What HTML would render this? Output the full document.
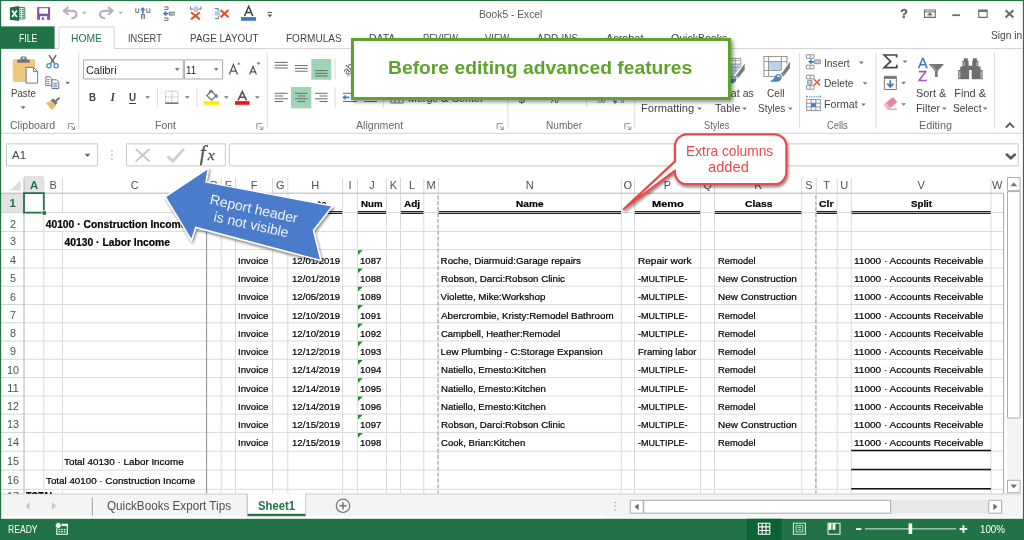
<!DOCTYPE html><html lang="en"><head><meta charset="utf-8"><title>Book5 - Excel</title><style>
html,body{margin:0;padding:0}
body{width:1024px;height:540px;overflow:hidden;position:relative;background:#fff;font-family:'Liberation Sans',sans-serif}
svg{position:absolute;left:0;top:0;overflow:visible}
.t{position:absolute;white-space:pre;line-height:1;transform-origin:0 0;display:block}
.c{-webkit-text-stroke:.22px #000}
.clip{position:absolute;overflow:hidden}
.lay{position:absolute;left:0;top:0;width:1024px;height:540px;will-change:transform}
</style></head><body>
<svg width="1024" height="540" viewBox="0 0 1024 540"><rect x="0.00" y="0.00" width="1024.00" height="540.00" fill="#fff" />
<line x1="1.00" y1="48.50" x2="1023.00" y2="48.50" stroke="#d4d4d4" stroke-width="1" />
<rect x="1.00" y="26.40" width="53.60" height="22.40" fill="#217346" />
<path d="M58.9 49.3V26.9H114.1V49.3" fill="#fff" stroke="#d4d4d4" stroke-width="1" />
<rect x="59.40" y="47.50" width="54.20" height="2.20" fill="#fff" />
<line x1="1.00" y1="133.30" x2="1023.00" y2="133.30" stroke="#d2d2d2" stroke-width="1" />
<line x1="78.70" y1="53.00" x2="78.70" y2="128.60" stroke="#dadada" stroke-width="1" />
<line x1="267.20" y1="53.00" x2="267.20" y2="128.60" stroke="#dadada" stroke-width="1" />
<line x1="507.90" y1="53.00" x2="507.90" y2="128.60" stroke="#dadada" stroke-width="1" />
<line x1="634.80" y1="53.00" x2="634.80" y2="128.60" stroke="#dadada" stroke-width="1" />
<line x1="799.60" y1="53.00" x2="799.60" y2="128.60" stroke="#dadada" stroke-width="1" />
<line x1="876.00" y1="53.00" x2="876.00" y2="128.60" stroke="#dadada" stroke-width="1" />
<line x1="994.30" y1="53.00" x2="994.30" y2="128.60" stroke="#dadada" stroke-width="1" />
<path d="M6.5 143.9H97.6V165.9H6.5Z" fill="#fff" stroke="#c8c8c8" stroke-width="1" />
<path d="M84.51 153.70H90.49L87.50 157.00Z" fill="#6a6a6a" stroke="none" stroke-width="1" />
<rect x="111.30" y="150.20" width="1.30" height="1.30" fill="#9a9a9a" />
<rect x="111.30" y="154.20" width="1.30" height="1.30" fill="#9a9a9a" />
<rect x="111.30" y="158.20" width="1.30" height="1.30" fill="#9a9a9a" />
<path d="M126.5 143.9H225.4V165.9H126.5Z" fill="#fff" stroke="#c8c8c8" stroke-width="1" />
<path d="M229.3 143.9H1018.2V165.9H229.3Z" fill="#fff" stroke="#c8c8c8" stroke-width="1" />
<path d="M135.8 149L149.6 161.4M149.6 149L135.8 161.4" fill="none" stroke="#c6c6c6" stroke-width="1.9" />
<path d="M167.6 156.2L172.8 161.2L184 148.8" fill="none" stroke="#cccccc" stroke-width="2.7" />
<path d="M1006 153.9L1010.8 158.3L1015.6 153.9" fill="none" stroke="#555" stroke-width="2.6" />
<rect x="24.00" y="176.00" width="19.80" height="17.20" fill="#e2e2e2" />
<rect x="1.00" y="193.20" width="23.00" height="19.40" fill="#e2e2e2" />
<path d="M20.6 180.2V190.6H10.2Z" fill="#dcdcdc" stroke="none" stroke-width="1" />
<line x1="43.80" y1="178.00" x2="43.80" y2="193.20" stroke="#d8d8d8" stroke-width="1" />
<line x1="62.40" y1="178.00" x2="62.40" y2="193.20" stroke="#d8d8d8" stroke-width="1" />
<line x1="207.00" y1="178.00" x2="207.00" y2="193.20" stroke="#d8d8d8" stroke-width="1" />
<line x1="221.20" y1="178.00" x2="221.20" y2="193.20" stroke="#d8d8d8" stroke-width="1" />
<line x1="235.50" y1="178.00" x2="235.50" y2="193.20" stroke="#d8d8d8" stroke-width="1" />
<line x1="272.60" y1="178.00" x2="272.60" y2="193.20" stroke="#d8d8d8" stroke-width="1" />
<line x1="287.80" y1="178.00" x2="287.80" y2="193.20" stroke="#d8d8d8" stroke-width="1" />
<line x1="342.60" y1="178.00" x2="342.60" y2="193.20" stroke="#d8d8d8" stroke-width="1" />
<line x1="357.40" y1="178.00" x2="357.40" y2="193.20" stroke="#d8d8d8" stroke-width="1" />
<line x1="386.40" y1="178.00" x2="386.40" y2="193.20" stroke="#d8d8d8" stroke-width="1" />
<line x1="400.50" y1="178.00" x2="400.50" y2="193.20" stroke="#d8d8d8" stroke-width="1" />
<line x1="423.80" y1="178.00" x2="423.80" y2="193.20" stroke="#d8d8d8" stroke-width="1" />
<line x1="438.40" y1="178.00" x2="438.40" y2="193.20" stroke="#d8d8d8" stroke-width="1" />
<line x1="621.25" y1="178.00" x2="621.25" y2="193.20" stroke="#d8d8d8" stroke-width="1" />
<line x1="634.50" y1="178.00" x2="634.50" y2="193.20" stroke="#d8d8d8" stroke-width="1" />
<line x1="700.50" y1="178.00" x2="700.50" y2="193.20" stroke="#d8d8d8" stroke-width="1" />
<line x1="714.50" y1="178.00" x2="714.50" y2="193.20" stroke="#d8d8d8" stroke-width="1" />
<line x1="801.75" y1="178.00" x2="801.75" y2="193.20" stroke="#d8d8d8" stroke-width="1" />
<line x1="816.25" y1="178.00" x2="816.25" y2="193.20" stroke="#d8d8d8" stroke-width="1" />
<line x1="837.20" y1="178.00" x2="837.20" y2="193.20" stroke="#d8d8d8" stroke-width="1" />
<line x1="851.25" y1="178.00" x2="851.25" y2="193.20" stroke="#d8d8d8" stroke-width="1" />
<line x1="991.00" y1="178.00" x2="991.00" y2="193.20" stroke="#d8d8d8" stroke-width="1" />
<line x1="1.00" y1="212.60" x2="24.00" y2="212.60" stroke="#d4d4d4" stroke-width="1" />
<line x1="24.00" y1="212.60" x2="1003.60" y2="212.60" stroke="#dadada" stroke-width="1" />
<line x1="1.00" y1="231.40" x2="24.00" y2="231.40" stroke="#d4d4d4" stroke-width="1" />
<line x1="24.00" y1="231.40" x2="1003.60" y2="231.40" stroke="#dadada" stroke-width="1" />
<line x1="1.00" y1="249.60" x2="24.00" y2="249.60" stroke="#d4d4d4" stroke-width="1" />
<line x1="24.00" y1="249.60" x2="1003.60" y2="249.60" stroke="#dadada" stroke-width="1" />
<line x1="1.00" y1="267.90" x2="24.00" y2="267.90" stroke="#d4d4d4" stroke-width="1" />
<line x1="24.00" y1="267.90" x2="1003.60" y2="267.90" stroke="#dadada" stroke-width="1" />
<line x1="1.00" y1="286.20" x2="24.00" y2="286.20" stroke="#d4d4d4" stroke-width="1" />
<line x1="24.00" y1="286.20" x2="1003.60" y2="286.20" stroke="#dadada" stroke-width="1" />
<line x1="1.00" y1="304.50" x2="24.00" y2="304.50" stroke="#d4d4d4" stroke-width="1" />
<line x1="24.00" y1="304.50" x2="1003.60" y2="304.50" stroke="#dadada" stroke-width="1" />
<line x1="1.00" y1="322.80" x2="24.00" y2="322.80" stroke="#d4d4d4" stroke-width="1" />
<line x1="24.00" y1="322.80" x2="1003.60" y2="322.80" stroke="#dadada" stroke-width="1" />
<line x1="1.00" y1="341.00" x2="24.00" y2="341.00" stroke="#d4d4d4" stroke-width="1" />
<line x1="24.00" y1="341.00" x2="1003.60" y2="341.00" stroke="#dadada" stroke-width="1" />
<line x1="1.00" y1="359.30" x2="24.00" y2="359.30" stroke="#d4d4d4" stroke-width="1" />
<line x1="24.00" y1="359.30" x2="1003.60" y2="359.30" stroke="#dadada" stroke-width="1" />
<line x1="1.00" y1="377.60" x2="24.00" y2="377.60" stroke="#d4d4d4" stroke-width="1" />
<line x1="24.00" y1="377.60" x2="1003.60" y2="377.60" stroke="#dadada" stroke-width="1" />
<line x1="1.00" y1="395.90" x2="24.00" y2="395.90" stroke="#d4d4d4" stroke-width="1" />
<line x1="24.00" y1="395.90" x2="1003.60" y2="395.90" stroke="#dadada" stroke-width="1" />
<line x1="1.00" y1="414.10" x2="24.00" y2="414.10" stroke="#d4d4d4" stroke-width="1" />
<line x1="24.00" y1="414.10" x2="1003.60" y2="414.10" stroke="#dadada" stroke-width="1" />
<line x1="1.00" y1="432.40" x2="24.00" y2="432.40" stroke="#d4d4d4" stroke-width="1" />
<line x1="24.00" y1="432.40" x2="1003.60" y2="432.40" stroke="#dadada" stroke-width="1" />
<line x1="1.00" y1="451.20" x2="24.00" y2="451.20" stroke="#d4d4d4" stroke-width="1" />
<line x1="24.00" y1="451.20" x2="1003.60" y2="451.20" stroke="#dadada" stroke-width="1" />
<line x1="1.00" y1="470.10" x2="24.00" y2="470.10" stroke="#d4d4d4" stroke-width="1" />
<line x1="24.00" y1="470.10" x2="1003.60" y2="470.10" stroke="#dadada" stroke-width="1" />
<line x1="1.00" y1="489.30" x2="24.00" y2="489.30" stroke="#d4d4d4" stroke-width="1" />
<line x1="24.00" y1="489.30" x2="1003.60" y2="489.30" stroke="#dadada" stroke-width="1" />
<line x1="43.80" y1="193.20" x2="43.80" y2="489.30" stroke="#dadada" stroke-width="1" />
<line x1="62.40" y1="193.20" x2="62.40" y2="212.60" stroke="#dadada" stroke-width="1" />
<line x1="62.40" y1="231.40" x2="62.40" y2="470.10" stroke="#dadada" stroke-width="1" />
<line x1="62.40" y1="489.30" x2="62.40" y2="493.70" stroke="#dadada" stroke-width="1" />
<line x1="206.60" y1="178.00" x2="206.60" y2="493.70" stroke="#8f8f8f" stroke-width="1" />
<line x1="221.20" y1="193.20" x2="221.20" y2="493.70" stroke="#dadada" stroke-width="1" />
<line x1="235.50" y1="193.20" x2="235.50" y2="493.70" stroke="#dadada" stroke-width="1" />
<line x1="272.60" y1="193.20" x2="272.60" y2="493.70" stroke="#dadada" stroke-width="1" />
<line x1="287.80" y1="193.20" x2="287.80" y2="493.70" stroke="#dadada" stroke-width="1" />
<line x1="342.60" y1="193.20" x2="342.60" y2="493.70" stroke="#dadada" stroke-width="1" />
<line x1="357.40" y1="193.20" x2="357.40" y2="493.70" stroke="#dadada" stroke-width="1" />
<line x1="386.40" y1="193.20" x2="386.40" y2="493.70" stroke="#dadada" stroke-width="1" />
<line x1="400.50" y1="193.20" x2="400.50" y2="493.70" stroke="#dadada" stroke-width="1" />
<line x1="423.80" y1="193.20" x2="423.80" y2="493.70" stroke="#dadada" stroke-width="1" />
<line x1="438.40" y1="193.20" x2="438.40" y2="493.70" stroke="#e2e2e2" stroke-width="1" />
<line x1="438.00" y1="195.40" x2="438.00" y2="493.70" stroke="#a8a8a8" stroke-width="1.25" stroke-dasharray="3.8 2.1"/>
<line x1="621.25" y1="193.20" x2="621.25" y2="493.70" stroke="#dadada" stroke-width="1" />
<line x1="634.50" y1="193.20" x2="634.50" y2="493.70" stroke="#dadada" stroke-width="1" />
<line x1="700.50" y1="193.20" x2="700.50" y2="493.70" stroke="#dadada" stroke-width="1" />
<line x1="714.50" y1="193.20" x2="714.50" y2="493.70" stroke="#dadada" stroke-width="1" />
<line x1="801.75" y1="193.20" x2="801.75" y2="493.70" stroke="#dadada" stroke-width="1" />
<line x1="816.25" y1="193.20" x2="816.25" y2="493.70" stroke="#e2e2e2" stroke-width="1" />
<line x1="815.85" y1="195.40" x2="815.85" y2="493.70" stroke="#a8a8a8" stroke-width="1.25" stroke-dasharray="3.8 2.1"/>
<line x1="837.20" y1="193.20" x2="837.20" y2="493.70" stroke="#dadada" stroke-width="1" />
<line x1="851.25" y1="193.20" x2="851.25" y2="493.70" stroke="#dadada" stroke-width="1" />
<line x1="991.00" y1="193.20" x2="991.00" y2="493.70" stroke="#dadada" stroke-width="1" />
<line x1="1003.60" y1="193.20" x2="1003.60" y2="493.70" stroke="#adadad" stroke-width="1.1" />
<line x1="1.00" y1="193.20" x2="1003.60" y2="193.20" stroke="#b4b4b4" stroke-width="1" />
<line x1="24.00" y1="178.00" x2="24.00" y2="493.70" stroke="#b4b4b4" stroke-width="1" />
<line x1="235.80" y1="211.50" x2="272.30" y2="211.50" stroke="#262626" stroke-width="1.15" />
<line x1="235.80" y1="213.35" x2="272.30" y2="213.35" stroke="#262626" stroke-width="1.35" />
<line x1="288.10" y1="211.50" x2="342.30" y2="211.50" stroke="#262626" stroke-width="1.15" />
<line x1="288.10" y1="213.35" x2="342.30" y2="213.35" stroke="#262626" stroke-width="1.35" />
<line x1="357.70" y1="211.50" x2="386.10" y2="211.50" stroke="#262626" stroke-width="1.15" />
<line x1="357.70" y1="213.35" x2="386.10" y2="213.35" stroke="#262626" stroke-width="1.35" />
<line x1="400.80" y1="211.50" x2="423.50" y2="211.50" stroke="#262626" stroke-width="1.15" />
<line x1="400.80" y1="213.35" x2="423.50" y2="213.35" stroke="#262626" stroke-width="1.35" />
<line x1="438.70" y1="211.50" x2="620.95" y2="211.50" stroke="#262626" stroke-width="1.15" />
<line x1="438.70" y1="213.35" x2="620.95" y2="213.35" stroke="#262626" stroke-width="1.35" />
<line x1="634.80" y1="211.50" x2="700.20" y2="211.50" stroke="#262626" stroke-width="1.15" />
<line x1="634.80" y1="213.35" x2="700.20" y2="213.35" stroke="#262626" stroke-width="1.35" />
<line x1="714.80" y1="211.50" x2="801.45" y2="211.50" stroke="#262626" stroke-width="1.15" />
<line x1="714.80" y1="213.35" x2="801.45" y2="213.35" stroke="#262626" stroke-width="1.35" />
<line x1="816.55" y1="211.50" x2="836.90" y2="211.50" stroke="#262626" stroke-width="1.15" />
<line x1="816.55" y1="213.35" x2="836.90" y2="213.35" stroke="#262626" stroke-width="1.35" />
<line x1="851.55" y1="211.50" x2="990.70" y2="211.50" stroke="#262626" stroke-width="1.15" />
<line x1="851.55" y1="213.35" x2="990.70" y2="213.35" stroke="#262626" stroke-width="1.35" />
<line x1="851.25" y1="450.60" x2="991.00" y2="450.60" stroke="#111" stroke-width="1.5" />
<line x1="851.25" y1="469.50" x2="991.00" y2="469.50" stroke="#111" stroke-width="1.5" />
<line x1="851.25" y1="488.70" x2="991.00" y2="488.70" stroke="#111" stroke-width="1.5" />
<path d="M358 250.20h4.8l-4.8 4.8Z" fill="#1f8b2c" stroke="none" stroke-width="1" />
<path d="M358 268.50h4.8l-4.8 4.8Z" fill="#1f8b2c" stroke="none" stroke-width="1" />
<path d="M358 286.80h4.8l-4.8 4.8Z" fill="#1f8b2c" stroke="none" stroke-width="1" />
<path d="M358 305.10h4.8l-4.8 4.8Z" fill="#1f8b2c" stroke="none" stroke-width="1" />
<path d="M358 323.40h4.8l-4.8 4.8Z" fill="#1f8b2c" stroke="none" stroke-width="1" />
<path d="M358 341.60h4.8l-4.8 4.8Z" fill="#1f8b2c" stroke="none" stroke-width="1" />
<path d="M358 359.90h4.8l-4.8 4.8Z" fill="#1f8b2c" stroke="none" stroke-width="1" />
<path d="M358 378.20h4.8l-4.8 4.8Z" fill="#1f8b2c" stroke="none" stroke-width="1" />
<path d="M358 396.50h4.8l-4.8 4.8Z" fill="#1f8b2c" stroke="none" stroke-width="1" />
<path d="M358 414.70h4.8l-4.8 4.8Z" fill="#1f8b2c" stroke="none" stroke-width="1" />
<path d="M358 433.00h4.8l-4.8 4.8Z" fill="#1f8b2c" stroke="none" stroke-width="1" />
<path d="M24 193.2H43.8V212.6H24Z" fill="none" stroke="#217346" stroke-width="1.8" />
<rect x="41.60" y="210.40" width="4.40" height="4.40" fill="#fff" />
<rect x="42.40" y="211.20" width="3.60" height="3.60" fill="#217346" />
<rect x="1007.00" y="177.00" width="13.50" height="316.00" fill="#f3f3f3" />
<path d="M1007.5 177.5H1020V190.7H1007.5Z" fill="#fff" stroke="#ababab" stroke-width="1" />
<path d="M1010.3 186.2L1013.75 182.2L1017.2 186.2Z" fill="#777" stroke="none" stroke-width="1" />
<path d="M1007.5 191.6H1020V418H1007.5Z" fill="#fff" stroke="#ababab" stroke-width="1" />
<path d="M1007.5 480.3H1020V492.7H1007.5Z" fill="#fff" stroke="#ababab" stroke-width="1" />
<path d="M1010.3 484.6L1013.75 488.6L1017.2 484.6Z" fill="#777" stroke="none" stroke-width="1" />
<rect x="1.00" y="493.70" width="1022.00" height="25.00" fill="#f4f4f4" />
<line x1="1.00" y1="494.00" x2="1023.00" y2="494.00" stroke="#cdcdcd" stroke-width="1" />
<rect x="1.00" y="515.90" width="604.00" height="2.90" fill="#fff" />
<rect x="605.00" y="516.40" width="418.00" height="2.40" fill="#f9f9f9" />
<path d="M29.6 502V510L25.6 506Z" fill="#c8c8c8" stroke="none" stroke-width="1" />
<path d="M52 502V510L56 506Z" fill="#c8c8c8" stroke="none" stroke-width="1" />
<line x1="92.40" y1="497.50" x2="92.40" y2="515.50" stroke="#ababab" stroke-width="1.2" />
<line x1="247.20" y1="494.00" x2="247.20" y2="514.00" stroke="#c8c8c8" stroke-width="1" />
<rect x="247.40" y="493.20" width="58.20" height="21.60" fill="#fff" />
<rect x="247.40" y="513.80" width="58.20" height="2.40" fill="#217346" />
<line x1="247.40" y1="493.70" x2="247.40" y2="514.00" stroke="#c8c8c8" stroke-width="1" />
<line x1="305.70" y1="493.70" x2="305.70" y2="514.00" stroke="#c8c8c8" stroke-width="1" />
<circle cx="343" cy="505.8" r="6.7" fill="none" stroke="#777" stroke-width="1.2"/>
<path d="M339.4 505.8H346.6M343 502.2V509.4" fill="none" stroke="#777" stroke-width="1.5" />
<rect x="614.40" y="501.80" width="1.30" height="1.30" fill="#9a9a9a" />
<rect x="614.40" y="505.60" width="1.30" height="1.30" fill="#9a9a9a" />
<rect x="614.40" y="509.40" width="1.30" height="1.30" fill="#9a9a9a" />
<rect x="630.00" y="500.00" width="372.40" height="13.40" fill="#e7e7e7" />
<path d="M630.3 500.3H643.2V513.2H630.3Z" fill="#fff" stroke="#ababab" stroke-width="1" />
<path d="M638.6 503.4V510.2L634.6 506.8Z" fill="#6a6a6a" stroke="none" stroke-width="1" />
<path d="M643.8 500.3H890.6V513.2H643.8Z" fill="#fff" stroke="#ababab" stroke-width="1" />
<path d="M988.8 500.3H1001.6V513.2H988.8Z" fill="#fff" stroke="#ababab" stroke-width="1" />
<path d="M993.4 503.4V510.2L997.4 506.8Z" fill="#6a6a6a" stroke="none" stroke-width="1" />
<rect x="1020.50" y="493.70" width="2.50" height="25.00" fill="#fafafa" />
<rect x="0.00" y="518.80" width="1024.00" height="21.40" fill="#217346" />
<rect x="747.00" y="518.80" width="34.80" height="21.40" fill="#0c6435" />
<rect x="0.00" y="0.00" width="1024.00" height="1.10" fill="#217346" />
<rect x="0.00" y="0.00" width="1.15" height="540.00" fill="#217346" />
<rect x="1022.90" y="0.00" width="1.10" height="540.00" fill="#217346" />
<path d="M9.9 7.4L19 6V20.9L9.9 19.7Z" fill="#1e7145" stroke="none" stroke-width="1" />
<path d="M19 7.4H24.2Q24.8 7.4 24.8 8V18.3Q24.8 18.9 24.2 18.9H19Z" fill="#fff" stroke="#1e7145" stroke-width="0.9" />
<line x1="20.00" y1="9.30" x2="24.00" y2="9.30" stroke="#2b8456" stroke-width="1.1" />
<line x1="20.00" y1="11.30" x2="24.00" y2="11.30" stroke="#2b8456" stroke-width="1.1" />
<line x1="20.00" y1="13.30" x2="24.00" y2="13.30" stroke="#2b8456" stroke-width="1.1" />
<line x1="20.00" y1="15.30" x2="24.00" y2="15.30" stroke="#2b8456" stroke-width="1.1" />
<line x1="20.00" y1="17.20" x2="24.00" y2="17.20" stroke="#2b8456" stroke-width="1.1" />
<line x1="21.60" y1="8.00" x2="21.60" y2="18.40" stroke="#fff" stroke-width="0.7" />
<path d="M12.1 10.5L16.9 16.9M16.9 10.5L12.1 16.9" fill="none" stroke="#fff" stroke-width="1.7" />
<path d="M37.1 7.1H50.1V19.8H37.1Z" fill="#8b53ad" stroke="none" stroke-width="1" />
<rect x="39.30" y="8.20" width="8.70" height="5.40" fill="#fff" />
<rect x="40.00" y="16.20" width="7.10" height="3.70" fill="#fff" />
<rect x="41.80" y="17.30" width="2.20" height="2.60" fill="#8b53ad" />
<path d="M68.6 7.2L63.7 10.9L68.6 14.6M64.2 10.9H72.6C78 10.9 78 17.6 71.4 18.4" fill="none" stroke="#b7b5b9" stroke-width="2.3" stroke-linejoin="round"/>
<path d="M81.86 11.83H86.54L84.20 14.47Z" fill="#b5b5b5" stroke="none" stroke-width="1" />
<path d="M108 7.2L112.9 10.9L108 14.6M112.4 10.9H104C98.6 10.9 98.6 17.6 105.2 18.4" fill="none" stroke="#b7b5b9" stroke-width="2.3" stroke-linejoin="round"/>
<path d="M118.26 11.83H122.94L120.60 14.47Z" fill="#b5b5b5" stroke="none" stroke-width="1" />
<path d="M135.8 8.3V12.4H138.7V8.3M146.8 8.3V12.4H149.8V8.3" fill="none" stroke="#6e6e6e" stroke-width="1" />
<path d="M142.8 6.9L139.9 10.3H141.9V13.6H143.7V10.3H145.7Z" fill="#3f7fc4" stroke="none" stroke-width="1" />
<path d="M141.6 18.9V14.5H144.4V18.9" fill="#b9d3ee" stroke="#6e6e6e" stroke-width="1" />
<path d="M164.1 6.9H168V9.4H164.1M164.1 18H168V20.4H164.1" fill="none" stroke="#6e6e6e" stroke-width="1" />
<path d="M162.9 13.6L166.3 10.7V12.7H168.4V14.5H166.3V16.5Z" fill="#3f7fc4" stroke="none" stroke-width="1" />
<path d="M175 12.3H169.5V15H175" fill="#b9d3ee" stroke="#6e6e6e" stroke-width="1" />
<path d="M190.6 6.4V9.2H193.4M201 6.4V9.2H198.2" fill="none" stroke="#6e6e6e" stroke-width="1" />
<rect x="194.40" y="6.40" width="3.00" height="5.60" fill="#b9d3ee" />
<line x1="194.40" y1="6.40" x2="194.40" y2="12.00" stroke="#8fb4dd" stroke-width="0.7" />
<line x1="197.40" y1="6.40" x2="197.40" y2="12.00" stroke="#8fb4dd" stroke-width="0.7" />
<path d="M191 12.2L199.9 19.4M199.9 12.2L191 19.4" fill="none" stroke="#d8532d" stroke-width="2" />
<path d="M214.8 8.6H218.3V10.8M214.8 18.6H218.3V16.2" fill="none" stroke="#6e6e6e" stroke-width="1" />
<rect x="214.80" y="11.90" width="5.60" height="3.20" fill="#b9d3ee" />
<line x1="214.80" y1="11.90" x2="220.40" y2="11.90" stroke="#8fb4dd" stroke-width="0.7" />
<line x1="214.80" y1="15.10" x2="220.40" y2="15.10" stroke="#8fb4dd" stroke-width="0.7" />
<path d="M220.6 9.9L228.5 17.3M228.5 9.9L220.6 17.3" fill="none" stroke="#d8532d" stroke-width="2" />
<path d="M244.5 16.1L248.65 6.3L252.8 16.1M246 12.6H251.3" fill="none" stroke="#444" stroke-width="1.5" stroke-linejoin="miter"/>
<rect x="241.00" y="17.10" width="15.10" height="3.70" fill="#3d78b7" />
<rect x="267.50" y="11.90" width="4.60" height="1.00" fill="#555" />
<path d="M267.3 14.4H272.3L269.8 17.2Z" fill="#555" stroke="none" stroke-width="1" />
<path d="M924.5 10H935.3V17.4H924.5Z" fill="none" stroke="#6b6b6b" stroke-width="1.1" />
<line x1="924.50" y1="11.90" x2="935.30" y2="11.90" stroke="#6b6b6b" stroke-width="1" />
<path d="M929.9 16.8V13.3M927.5 15.3L929.9 13L932.3 15.3" fill="none" stroke="#6b6b6b" stroke-width="1.15" />
<rect x="952.30" y="14.30" width="7.80" height="1.80" fill="#6b6b6b" />
<path d="M978.8 10.6H987.1V17.4H978.8Z" fill="none" stroke="#6b6b6b" stroke-width="1.1" />
<rect x="978.30" y="9.50" width="9.30" height="2.40" fill="#6b6b6b" />
<path d="M1005.6 10.2L1013.4 17.6M1013.4 10.2L1005.6 17.6" fill="none" stroke="#6b6b6b" stroke-width="2.1" />
<path d="M14.2 59.2H33.6Q35.1 59.2 35.1 60.7V80.5Q35.1 82 33.6 82H14.2Q12.7 82 12.7 80.5V60.7Q12.7 59.2 14.2 59.2Z" fill="#edc87e" stroke="none" stroke-width="1" />
<path d="M17.2 62.7V60.2Q17.2 59.4 18 59.4H20.6V58Q20.6 56.6 22 56.6H25.2Q26.6 56.6 26.6 58V59.4H29Q29.8 59.4 29.8 60.2V62.7Z" fill="#777" stroke="none" stroke-width="1" />
<rect x="22.60" y="57.60" width="2.00" height="1.30" fill="#fff" />
<path d="M26.1 67.4H33.4L37.6 71.6V83.1H26.1Z" fill="#fff" stroke="#7a7a7a" stroke-width="1" />
<path d="M33.4 67.4V71.6H37.6" fill="none" stroke="#7a7a7a" stroke-width="1" />
<path d="M20.63 106.36H25.57L23.10 109.13Z" fill="#777" stroke="none" stroke-width="1" />
<path d="M49 55.1L54.6 63.6M56.2 55.1L50.6 63.6" fill="none" stroke="#666" stroke-width="1.5" />
<circle cx="49" cy="65.7" r="2.1" fill="none" stroke="#4a86c8" stroke-width="1.2"/>
<circle cx="56.2" cy="65.7" r="2.1" fill="none" stroke="#4a86c8" stroke-width="1.2"/>
<path d="M45.9 76.8H50L51.8 78.6V85.6H45.9Z" fill="#fff" stroke="#777" stroke-width="1" />
<line x1="47.20" y1="79.60" x2="49.60" y2="79.60" stroke="#4a86c8" stroke-width="1" />
<line x1="47.20" y1="81.60" x2="49.60" y2="81.60" stroke="#4a86c8" stroke-width="1" />
<line x1="47.20" y1="83.60" x2="49.60" y2="83.60" stroke="#4a86c8" stroke-width="1" />
<path d="M51.9 79.8H56.6L58.8 82V88.5H51.9Z" fill="#fff" stroke="#777" stroke-width="1" />
<line x1="53.30" y1="83.20" x2="57.40" y2="83.20" stroke="#4a86c8" stroke-width="1" />
<line x1="53.30" y1="85.00" x2="57.40" y2="85.00" stroke="#4a86c8" stroke-width="1" />
<line x1="53.30" y1="86.80" x2="57.40" y2="86.80" stroke="#4a86c8" stroke-width="1" />
<path d="M65.36 81.83H70.04L67.70 84.47Z" fill="#777" stroke="none" stroke-width="1" />
<path d="M45.7 102.7L50.7 101.2L56 105.7L51.8 109.9Z" fill="#e9bd6c" stroke="none" stroke-width="1" />
<path d="M50.4 100.6L53.2 98.6L57.6 102.6L55.6 105.2Z" fill="#777" stroke="none" stroke-width="1" />
<path d="M55 100.4L59 96.9L60.2 98.2L56.3 101.7Z" fill="#666" stroke="none" stroke-width="1" />
<path d="M83.5 59.9H183.3V79H83.5Z" fill="#fff" stroke="#ababab" stroke-width="1" />
<path d="M184.4 59.9H222.6V79H184.4Z" fill="#fff" stroke="#ababab" stroke-width="1" />
<path d="M174.86 68.13H179.54L177.20 70.77Z" fill="#666" stroke="none" stroke-width="1" />
<path d="M213.86 68.13H218.54L216.20 70.77Z" fill="#666" stroke="none" stroke-width="1" />
<path d="M229.3 74.6L233.4 64.6L237.5 74.6M230.8 71.1H236" fill="none" stroke="#555" stroke-width="1.3" />
<path d="M238.8 62.3L240.6 64.6H237Z" fill="#3f7fc4" stroke="none" stroke-width="1" />
<path d="M249.6 74.6L253 66.4L256.4 74.6M250.9 71.8H255.1" fill="none" stroke="#555" stroke-width="1.2" />
<path d="M256.6 62.6H260.6L258.6 65Z" fill="#3f7fc4" stroke="none" stroke-width="1" />
<path d="M145.26 96.13H149.94L147.60 98.77Z" fill="#777" stroke="none" stroke-width="1" />
<line x1="157.60" y1="88.00" x2="157.60" y2="107.00" stroke="#dcdcdc" stroke-width="1" />
<path d="M165.6 91.1H178V102.8H165.6Z M171.8 91.1V102.8 M165.6 96.95H178" fill="none" stroke="#a8a8a8" stroke-width="0.9" stroke-dasharray="1.2 1"/>
<line x1="165.20" y1="103.20" x2="178.40" y2="103.20" stroke="#555" stroke-width="1.2" />
<path d="M184.86 96.13H189.54L187.20 98.77Z" fill="#777" stroke="none" stroke-width="1" />
<line x1="197.00" y1="88.00" x2="197.00" y2="107.00" stroke="#dcdcdc" stroke-width="1" />
<rect x="203.80" y="101.10" width="15.20" height="3.70" fill="#ffef00" />
<path d="M206.8 95.6L211.4 91.2L216.2 96L211.6 100Z" fill="#fff" stroke="#666" stroke-width="1.2" />
<path d="M209.6 93.4V90.6Q210.9 89.4 212.2 90.6V92.2" fill="none" stroke="#666" stroke-width="0.9" />
<path d="M216.4 93.6Q218.6 96.2 217.2 98.4Q215.6 98 216.4 93.6Z" fill="#3f7fc4" stroke="none" stroke-width="1" />
<path d="M223.96 96.13H228.64L226.30 98.77Z" fill="#777" stroke="none" stroke-width="1" />
<path d="M238 100.3L242.3 91.6L246.6 100.3M239.8 97.2H244.8" fill="none" stroke="#555" stroke-width="1.6" />
<rect x="235.00" y="101.10" width="14.50" height="3.70" fill="#f0141e" />
<path d="M254.96 96.13H259.64L257.30 98.77Z" fill="#777" stroke="none" stroke-width="1" />
<rect x="311.30" y="59.00" width="19.90" height="20.80" fill="#9fd5b7" />
<rect x="291.00" y="87.00" width="20.30" height="21.30" fill="#9fd5b7" />
<line x1="274.70" y1="62.40" x2="287.70" y2="62.40" stroke="#6a6a6a" stroke-width="1" />
<line x1="274.70" y1="65.20" x2="287.70" y2="65.20" stroke="#6a6a6a" stroke-width="1" />
<line x1="274.70" y1="68.00" x2="287.70" y2="68.00" stroke="#6a6a6a" stroke-width="1" />
<line x1="295.00" y1="65.60" x2="307.70" y2="65.60" stroke="#6a6a6a" stroke-width="1" />
<line x1="295.00" y1="68.40" x2="307.70" y2="68.40" stroke="#6a6a6a" stroke-width="1" />
<line x1="295.00" y1="71.20" x2="307.70" y2="71.20" stroke="#6a6a6a" stroke-width="1" />
<line x1="315.00" y1="70.60" x2="327.60" y2="70.60" stroke="#6a6a6a" stroke-width="1" />
<line x1="315.00" y1="73.30" x2="327.60" y2="73.30" stroke="#6a6a6a" stroke-width="1" />
<line x1="315.00" y1="76.00" x2="327.60" y2="76.00" stroke="#6a6a6a" stroke-width="1" />
<line x1="335.20" y1="59.00" x2="335.20" y2="79.50" stroke="#dcdcdc" stroke-width="1" />
<line x1="274.70" y1="93.30" x2="287.70" y2="93.30" stroke="#6a6a6a" stroke-width="1" />
<line x1="295.00" y1="93.30" x2="307.70" y2="93.30" stroke="#6a6a6a" stroke-width="1" />
<line x1="315.00" y1="93.30" x2="327.60" y2="93.30" stroke="#6a6a6a" stroke-width="1" />
<line x1="274.70" y1="96.00" x2="283.20" y2="96.00" stroke="#6a6a6a" stroke-width="1" />
<line x1="297.60" y1="96.00" x2="305.10" y2="96.00" stroke="#6a6a6a" stroke-width="1" />
<line x1="319.60" y1="96.00" x2="327.60" y2="96.00" stroke="#6a6a6a" stroke-width="1" />
<line x1="274.70" y1="98.80" x2="287.70" y2="98.80" stroke="#6a6a6a" stroke-width="1" />
<line x1="295.00" y1="98.80" x2="307.70" y2="98.80" stroke="#6a6a6a" stroke-width="1" />
<line x1="315.00" y1="98.80" x2="327.60" y2="98.80" stroke="#6a6a6a" stroke-width="1" />
<line x1="274.70" y1="101.50" x2="283.20" y2="101.50" stroke="#6a6a6a" stroke-width="1" />
<line x1="297.60" y1="101.50" x2="305.10" y2="101.50" stroke="#6a6a6a" stroke-width="1" />
<line x1="319.60" y1="101.50" x2="327.60" y2="101.50" stroke="#6a6a6a" stroke-width="1" />
<line x1="335.20" y1="87.00" x2="335.20" y2="108.00" stroke="#dcdcdc" stroke-width="1" />
<line x1="347.60" y1="76.20" x2="352.20" y2="71.40" stroke="#666" stroke-width="1" />
<path d="M342.2 97.4L345.6 94.6V96.6H349.4V98.2H345.6V100.2Z" fill="#3f7fc4" stroke="none" stroke-width="1" />
<line x1="343.00" y1="93.30" x2="357.00" y2="93.30" stroke="#6a6a6a" stroke-width="1" />
<line x1="351.00" y1="96.00" x2="357.00" y2="96.00" stroke="#6a6a6a" stroke-width="1" />
<line x1="351.00" y1="98.80" x2="357.00" y2="98.80" stroke="#6a6a6a" stroke-width="1" />
<line x1="343.00" y1="101.50" x2="357.00" y2="101.50" stroke="#6a6a6a" stroke-width="1" />
<line x1="364.00" y1="93.30" x2="377.00" y2="93.30" stroke="#6a6a6a" stroke-width="1" />
<line x1="364.00" y1="96.00" x2="377.00" y2="96.00" stroke="#6a6a6a" stroke-width="1" />
<line x1="364.00" y1="98.80" x2="377.00" y2="98.80" stroke="#6a6a6a" stroke-width="1" />
<line x1="364.00" y1="101.50" x2="377.00" y2="101.50" stroke="#6a6a6a" stroke-width="1" />
<line x1="383.30" y1="87.00" x2="383.30" y2="108.00" stroke="#dcdcdc" stroke-width="1" />
<path d="M390.8 92.8H403.2V103H390.8Z M390.8 97.9H403.2 M394.9 97.9V103 M399 97.9V103" fill="none" stroke="#777" stroke-width="1" />
<line x1="586.50" y1="87.00" x2="586.50" y2="107.00" stroke="#dcdcdc" stroke-width="1" />
<path d="M612.8 99.8L617.8 101.8L614.6 104Z" fill="#3f7fc4" stroke="none" stroke-width="1" />
<path d="M68.4 129V123.6H73.80000000000001" fill="none" stroke="#8a8a8a" stroke-width="1" />
<path d="M70.80000000000001 125.8L74.0 129M74.4 126.4V129.4H71.4" fill="none" stroke="#8a8a8a" stroke-width="1" />
<path d="M256.8 129V123.6H262.2" fill="none" stroke="#8a8a8a" stroke-width="1" />
<path d="M259.2 125.8L262.40000000000003 129M262.8 126.4V129.4H259.8" fill="none" stroke="#8a8a8a" stroke-width="1" />
<path d="M497.2 129V123.6H502.59999999999997" fill="none" stroke="#8a8a8a" stroke-width="1" />
<path d="M499.59999999999997 125.8L502.8 129M503.2 126.4V129.4H500.2" fill="none" stroke="#8a8a8a" stroke-width="1" />
<path d="M624.8 129V123.6H630.1999999999999" fill="none" stroke="#8a8a8a" stroke-width="1" />
<path d="M627.1999999999999 125.8L630.4 129M630.8 126.4V129.4H627.8" fill="none" stroke="#8a8a8a" stroke-width="1" />
<path d="M722 58.4H740.8V76.4H722Z" fill="#fff" stroke="#9a9a9a" stroke-width="1" />
<rect x="722.50" y="64.00" width="17.80" height="12.00" fill="#bcd2ec" />
<line x1="722.00" y1="60.60" x2="740.80" y2="60.60" stroke="#9a9a9a" stroke-width="0.8" />
<line x1="722.00" y1="64.00" x2="740.80" y2="64.00" stroke="#9a9a9a" stroke-width="0.8" />
<line x1="722.00" y1="67.60" x2="740.80" y2="67.60" stroke="#9a9a9a" stroke-width="0.8" />
<line x1="722.00" y1="70.80" x2="740.80" y2="70.80" stroke="#9a9a9a" stroke-width="0.8" />
<line x1="722.00" y1="73.60" x2="740.80" y2="73.60" stroke="#9a9a9a" stroke-width="0.8" />
<line x1="729.60" y1="58.40" x2="729.60" y2="76.40" stroke="#9a9a9a" stroke-width="0.8" />
<line x1="735.60" y1="58.40" x2="735.60" y2="76.40" stroke="#9a9a9a" stroke-width="0.8" />
<path d="M731 78L745.4 62V80.5H736Z" fill="#fff"/>
<path d="M736.9 74.5L744.6999999999999 63.50000000000001V69.80000000000001L739.1999999999999 76.80000000000001Z" fill="#7a7a7a" stroke="none" stroke-width="1" />
<path d="M735.6 75.5L736.6999999999999 74.30000000000001L739.1 76.9L738.0 78.10000000000001Z" fill="#7a7a7a" stroke="none" stroke-width="1" />
<path d="M724.4 83.4Q728.8 81.0 729.8 77.80000000000001Q731.0 75.2 734.0 75.80000000000001Q737.1999999999999 76.80000000000001 736.1999999999999 80.2Q735.0 83.4 731.0 83.4Z" fill="#4a85c5" stroke="none" stroke-width="1" />
<path d="M731.8 78.2Q733.8 76.60000000000001 734.8 78.80000000000001" fill="none" stroke="#fff" stroke-width="1.1" />
<path d="M763.9 56.5H787V76.5H763.9Z" fill="#fff" stroke="#9a9a9a" stroke-width="1.1" />
<rect x="768.60" y="61.70" width="12.80" height="8.80" fill="#bcd2ec" />
<line x1="768.50" y1="56.50" x2="768.50" y2="76.50" stroke="#9a9a9a" stroke-width="1" />
<line x1="781.40" y1="56.50" x2="781.40" y2="76.50" stroke="#9a9a9a" stroke-width="1" />
<line x1="763.90" y1="61.60" x2="787.00" y2="61.60" stroke="#9a9a9a" stroke-width="1" />
<line x1="763.90" y1="70.50" x2="787.00" y2="70.50" stroke="#9a9a9a" stroke-width="1" />
<path d="M776.5 76L790.6 60V78.5H781Z" fill="#fff"/>
<path d="M782.2 72.8L790.0 61.800000000000004V68.10000000000001L784.5 75.10000000000001Z" fill="#7a7a7a" stroke="none" stroke-width="1" />
<path d="M780.9000000000001 73.8L782.0 72.60000000000001L784.4000000000001 75.2L783.3000000000001 76.4Z" fill="#7a7a7a" stroke="none" stroke-width="1" />
<path d="M769.7 81.7Q774.1 79.3 775.1 76.10000000000001Q776.3000000000001 73.5 779.3000000000001 74.10000000000001Q782.5 75.10000000000001 781.5 78.5Q780.3000000000001 81.7 776.3000000000001 81.7Z" fill="#4a85c5" stroke="none" stroke-width="1" />
<path d="M777.1 76.5Q779.1 74.9 780.1 77.10000000000001" fill="none" stroke="#fff" stroke-width="1.1" />
<path d="M697.26 107.43H701.94L699.60 110.07Z" fill="#777" stroke="none" stroke-width="1" />
<path d="M742.26 107.43H746.94L744.60 110.07Z" fill="#777" stroke="none" stroke-width="1" />
<path d="M787.96 107.43H792.64L790.30 110.07Z" fill="#777" stroke="none" stroke-width="1" />
<path d="M806.4 54.8H814.0V58.4H806.4Z M806.4 65.2H814.0V68.8H806.4Z M810.1999999999999 54.8V58.4 M810.1999999999999 65.2V68.8" fill="none" stroke="#8a8a8a" stroke-width="0.9" />
<path d="M808.2 61.8L811.6 58.8V60.9H814V62.7H811.6V64.8Z" fill="#3f7fc4" stroke="none" stroke-width="1" />
<path d="M814.6 59.9H820.4V63.7H814.6Z" fill="#b9d3ee" stroke="#8a8a8a" stroke-width="0.9" />
<path d="M858.96 61.53H863.64L861.30 64.17Z" fill="#777" stroke="none" stroke-width="1" />
<path d="M806.4 75.2H814.0V78.8H806.4Z M806.4 85.60000000000001H814.0V89.2H806.4Z M810.1999999999999 75.2V78.8 M810.1999999999999 85.60000000000001V89.2" fill="none" stroke="#8a8a8a" stroke-width="0.9" />
<path d="M807.6 80.4H812V84.2H807.6Z" fill="#b9d3ee" stroke="#8a8a8a" stroke-width="0.9" />
<path d="M814 79.2L820 85.2M820 79.2L814 85.2" fill="none" stroke="#d8532d" stroke-width="1.5" />
<path d="M862.66 82.23H867.34L865.00 84.87Z" fill="#777" stroke="none" stroke-width="1" />
<path d="M806.6 99.6H820.4V110.6H806.6Z M806.6 103.2H820.4 M806.6 106.9H820.4 M811.2 99.6V110.6 M815.8 99.6V110.6" fill="none" stroke="#8a8a8a" stroke-width="0.9" />
<rect x="811.20" y="103.20" width="4.60" height="3.70" fill="#3f7fc4" />
<path d="M806.6 96.8H820.4M806.6 95.6V98M820.4 95.6V98" fill="none" stroke="#3f7fc4" stroke-width="0.9" stroke-dasharray="1.4 0.9"/>
<path d="M861.16 103.43H865.84L863.50 106.07Z" fill="#777" stroke="none" stroke-width="1" />
<path d="M896.6 57.6V55H884.2L890.6 61.4L884.2 67.6H896.8V64.8" fill="none" stroke="#444" stroke-width="1.7" stroke-linejoin="miter"/>
<path d="M902.66 60.43H907.34L905.00 63.07Z" fill="#777" stroke="none" stroke-width="1" />
<path d="M884.3 76.3H896.3V89.5H884.3Z" fill="#fff" stroke="#777" stroke-width="1" />
<rect x="884.30" y="76.30" width="12.00" height="2.60" fill="#777" />
<path d="M890.3 80.2V86.6M887.2 83.6L890.3 86.9L893.4 83.6" fill="none" stroke="#3f7fc4" stroke-width="1.8" />
<path d="M901.26 81.83H905.94L903.60 84.47Z" fill="#777" stroke="none" stroke-width="1" />
<g transform="rotate(-40 890.4 103.4)"><rect x="884.2" y="100.2" width="12.4" height="6.6" rx="1" fill="#e9869b"/><rect x="884.2" y="100.2" width="3.4" height="6.6" rx="1" fill="#f4bcc8"/></g>
<line x1="888.40" y1="109.20" x2="896.80" y2="109.20" stroke="#9a9a9a" stroke-width="1" />
<path d="M901.26 103.23H905.94L903.60 105.87Z" fill="#777" stroke="none" stroke-width="1" />
<path d="M928.6 63.9H944L937.7 70.9V77H935V70.9Z" fill="#777" stroke="none" stroke-width="1" />
<path d="M931.6 65.2L936.3 70.4" fill="none" stroke="#d8d8d8" stroke-width="0.7" />
<rect x="963.90" y="58.30" width="3.90" height="3.00" fill="#6e6e6e" />
<rect x="962.40" y="60.80" width="6.20" height="6.40" fill="#6e6e6e" />
<rect x="960.20" y="66.60" width="8.90" height="4.00" fill="#6e6e6e" />
<rect x="958.20" y="70.00" width="10.90" height="9.20" fill="#6e6e6e" />
<rect x="973.00" y="58.30" width="3.90" height="3.00" fill="#6e6e6e" />
<rect x="972.20" y="60.80" width="6.20" height="6.40" fill="#6e6e6e" />
<rect x="971.70" y="66.60" width="8.90" height="4.00" fill="#6e6e6e" />
<rect x="971.70" y="70.00" width="10.90" height="9.20" fill="#6e6e6e" />
<rect x="968.60" y="65.60" width="3.60" height="4.40" fill="#6e6e6e" />
<rect x="959.30" y="71.20" width="1.00" height="7.00" fill="#d4d4d4" />
<rect x="980.60" y="71.20" width="1.00" height="7.00" fill="#d4d4d4" />
<rect x="963.60" y="62.00" width="0.90" height="4.00" fill="#d4d4d4" />
<rect x="976.60" y="62.00" width="0.90" height="4.00" fill="#d4d4d4" />
<path d="M941.96 107.43H946.64L944.30 110.07Z" fill="#777" stroke="none" stroke-width="1" />
<path d="M982.86 107.43H987.54L985.20 110.07Z" fill="#777" stroke="none" stroke-width="1" />
<path d="M1005.8 127.6L1009.9 123.4L1014 127.6" fill="none" stroke="#555" stroke-width="1.8" />
<path d="M56.8 527.4V534.2H67.3V524.4H61.6" fill="none" stroke="#fff" stroke-width="1.1" />
<rect x="61.40" y="523.90" width="6.40" height="2.20" fill="#fff" />
<circle cx="58.3" cy="525.5" r="2.9" fill="#fff" stroke="#217346" stroke-width="0.8"/>
<rect x="58.60" y="528.90" width="1.70" height="1.20" fill="#fff" />
<rect x="61.20" y="528.90" width="1.70" height="1.20" fill="#fff" />
<rect x="63.80" y="528.90" width="1.70" height="1.20" fill="#fff" />
<rect x="58.60" y="531.10" width="1.70" height="1.20" fill="#fff" />
<rect x="61.20" y="531.10" width="1.70" height="1.20" fill="#fff" />
<rect x="63.80" y="531.10" width="1.70" height="1.20" fill="#fff" />
<path d="M758.4 523.2H769.8V534.2H758.4Z M758.4 526.9H769.8 M758.4 530.5H769.8 M762.2 523.2V534.2 M766 523.2V534.2" fill="none" stroke="#fff" stroke-width="1.1" />
<path d="M793.4 523.2H805.4V534.2H793.4Z" fill="none" stroke="#d5e6dc" stroke-width="1.1" />
<path d="M796 525.6H802.8V531.8H796Z M797.6 527.6H801.2 M797.6 529.6H801.2" fill="none" stroke="#d5e6dc" stroke-width="0.9" />
<path d="M828 523.2H840V534.2H828Z" fill="none" stroke="#e5efe9" stroke-width="1.1" />
<rect x="828.60" y="523.20" width="2.80" height="6.60" fill="#fff" />
<rect x="832.60" y="523.20" width="2.80" height="6.60" fill="#fff" />
<rect x="856.00" y="528.20" width="5.40" height="1.70" fill="#fff" />
<line x1="865.00" y1="528.90" x2="956.00" y2="528.90" stroke="#dfeae4" stroke-width="1" />
<rect x="908.60" y="523.40" width="3.60" height="10.60" fill="#fff" />
<rect x="959.60" y="528.10" width="7.60" height="1.80" fill="#fff" />
<rect x="962.50" y="525.20" width="1.80" height="7.60" fill="#fff" /></svg>
<div class="lay">
<span class="t" style="font-size:11.3px;color:#5a5a5a;top:8.60px;left:479.00px;transform:scaleX(0.9081);">Book5 - Excel</span>
<span class="t" style="font-size:11.2px;color:#fff;top:32.65px;left:19.00px;transform:scaleX(0.7741);">FILE</span>
<span class="t" style="font-size:11.2px;color:#217346;top:32.65px;left:70.70px;transform:scaleX(0.9177);">HOME</span>
<span class="t" style="font-size:11.2px;color:#444;top:32.65px;left:128.00px;transform:scaleX(0.8279);">INSERT</span>
<span class="t" style="font-size:11.2px;color:#444;top:32.65px;left:190.00px;transform:scaleX(0.8862);">PAGE LAYOUT</span>
<span class="t" style="font-size:11.2px;color:#444;top:32.65px;left:286.00px;transform:scaleX(0.8943);">FORMULAS</span>
<span class="t" style="font-size:11.2px;color:#444;top:32.65px;left:368.50px;transform:scaleX(0.9330);">DATA</span>
<span class="t" style="font-size:11.2px;color:#444;top:32.65px;left:423.00px;transform:scaleX(0.7929);">REVIEW</span>
<span class="t" style="font-size:11.2px;color:#444;top:32.65px;left:485.30px;transform:scaleX(0.8463);">VIEW</span>
<span class="t" style="font-size:11.2px;color:#444;top:32.65px;left:537.20px;transform:scaleX(0.8935);">ADD-INS</span>
<span class="t" style="font-size:11.2px;color:#444;top:32.65px;left:605.80px;transform:scaleX(0.9699);">Acrobat</span>
<span class="t" style="font-size:11.2px;color:#444;top:32.65px;left:670.80px;transform:scaleX(0.9413);">QuickBooks</span>
<span class="t" style="font-size:11px;color:#444;top:29.75px;left:990.50px;transform:scaleX(0.9245);">Sign in</span>
<span class="t" style="font-size:11px;color:#444;top:87.75px;left:11.40px;transform:scaleX(0.8813);">Paste</span>
<span class="t" style="font-size:11px;color:#666;top:119.75px;left:9.80px;transform:scaleX(0.9598);">Clipboard</span>
<span class="t" style="font-size:11px;color:#222;top:64.75px;left:85.80px;transform:scaleX(0.9812);">Calibri</span>
<span class="t" style="font-size:11px;color:#222;top:64.75px;left:186.40px;transform:scaleX(0.9018);">11</span>
<span class="t" style="font-size:11px;color:#666;top:119.75px;left:155.00px;transform:scaleX(0.9539);">Font</span>
<span class="t" style="font-size:11px;color:#666;top:119.75px;left:356.40px;transform:scaleX(0.9648);">Alignment</span>
<span class="t" style="font-size:11px;color:#666;top:119.75px;left:546.00px;transform:scaleX(0.9201);">Number</span>
<span class="t" style="font-size:11px;color:#666;top:119.75px;left:704.00px;transform:scaleX(0.8475);">Styles</span>
<span class="t" style="font-size:11px;color:#666;top:119.75px;left:827.30px;transform:scaleX(0.8465);">Cells</span>
<span class="t" style="font-size:11px;color:#666;top:119.75px;left:918.80px;transform:scaleX(0.9810);">Editing</span>
<span class="t" style="font-size:11.6px;color:#444;top:91.45px;font-weight:700;left:88.80px;transform:scaleX(0.8358);">B</span>
<span class="t" style="font-size:11.5px;color:#444;top:91.50px;font-weight:700;font-style:italic;font-family:'Liberation Serif',serif;left:110.40px;">I</span>
<span class="t" style="font-size:10.8px;color:#444;top:91.85px;font-weight:700;left:128.90px;transform:scaleX(0.9088);text-decoration:underline;text-underline-offset:1.5px;">U</span>
<span class="t" style="font-size:11.4px;color:#444;top:92.55px;left:407.50px;transform:scaleX(0.9390);">Merge &amp; Center</span>
<span class="t" style="font-size:11px;color:#444;top:87.75px;left:641.00px;">Conditional</span>
<span class="t" style="font-size:11px;color:#444;top:102.75px;left:641.00px;transform:scaleX(1.0118);">Formatting</span>
<span class="t" style="font-size:11px;color:#444;top:87.75px;left:705.50px;transform:scaleX(0.9674);">Format as</span>
<span class="t" style="font-size:11px;color:#444;top:102.75px;left:714.70px;transform:scaleX(0.9621);">Table</span>
<span class="t" style="font-size:11px;color:#444;top:87.75px;left:766.50px;transform:scaleX(0.9233);">Cell</span>
<span class="t" style="font-size:11px;color:#444;top:102.75px;left:758.30px;transform:scaleX(0.9109);">Styles</span>
<span class="t" style="font-size:11px;color:#444;top:57.75px;left:824.30px;transform:scaleX(0.9340);">Insert</span>
<span class="t" style="font-size:11px;color:#444;top:77.75px;left:824.30px;transform:scaleX(0.9278);">Delete</span>
<span class="t" style="font-size:11px;color:#444;top:98.75px;left:824.30px;transform:scaleX(0.9672);">Format</span>
<span class="t" style="font-size:11px;color:#444;top:87.75px;left:916.00px;transform:scaleX(0.9909);">Sort &amp;</span>
<span class="t" style="font-size:11px;color:#444;top:102.75px;left:916.00px;transform:scaleX(0.9815);">Filter</span>
<span class="t" style="font-size:11px;color:#444;top:87.75px;left:954.30px;">Find &amp;</span>
<span class="t" style="font-size:11px;color:#444;top:102.75px;left:952.50px;transform:scaleX(0.9320);">Select</span>
<span class="t" style="font-size:11px;color:#444;top:149.75px;left:12.00px;transform:scaleX(1.0394);">A1</span>
<span class="t" style="font-size:21px;color:#555;top:142.75px;font-style:italic;font-family:'Liberation Serif',serif;left:199.80px;-webkit-text-stroke:.3px #555;">f</span>
<span class="t" style="font-size:15.5px;color:#555;top:147.00px;font-style:italic;font-family:'Liberation Serif',serif;left:207.80px;-webkit-text-stroke:.3px #555;">x</span>
<span class="t" style="font-size:11.4px;color:#217346;top:179.55px;font-weight:700;left:29.98px;">A</span>
<span class="t" style="font-size:11px;color:#505050;top:179.75px;left:49.43px;">B</span>
<span class="t" style="font-size:11px;color:#505050;top:179.75px;left:130.72px;">C</span>
<span class="t" style="font-size:11px;color:#505050;top:179.75px;left:210.12px;">D</span>
<span class="t" style="font-size:11px;color:#505050;top:179.75px;left:224.68px;">E</span>
<span class="t" style="font-size:11px;color:#505050;top:179.75px;left:250.68px;">F</span>
<span class="t" style="font-size:11px;color:#505050;top:179.75px;left:275.92px;">G</span>
<span class="t" style="font-size:11px;color:#505050;top:179.75px;left:311.22px;">H</span>
<span class="t" style="font-size:11px;color:#505050;top:179.75px;left:348.47px;">I</span>
<span class="t" style="font-size:11px;color:#505050;top:179.75px;left:369.15px;">J</span>
<span class="t" style="font-size:11px;color:#505050;top:179.75px;left:389.78px;">K</span>
<span class="t" style="font-size:11px;color:#505050;top:179.75px;left:409.09px;">L</span>
<span class="t" style="font-size:11px;color:#505050;top:179.75px;left:426.51px;">M</span>
<span class="t" style="font-size:11px;color:#505050;top:179.75px;left:525.85px;">N</span>
<span class="t" style="font-size:11px;color:#505050;top:179.75px;left:623.59px;">O</span>
<span class="t" style="font-size:11px;color:#505050;top:179.75px;left:663.83px;">P</span>
<span class="t" style="font-size:11px;color:#505050;top:179.75px;left:703.22px;">Q</span>
<span class="t" style="font-size:11px;color:#505050;top:179.75px;left:754.15px;">R</span>
<span class="t" style="font-size:11px;color:#505050;top:179.75px;left:805.33px;">S</span>
<span class="t" style="font-size:11px;color:#505050;top:179.75px;left:823.36px;">T</span>
<span class="t" style="font-size:11px;color:#505050;top:179.75px;left:840.25px;">U</span>
<span class="t" style="font-size:11px;color:#505050;top:179.75px;left:917.45px;">V</span>
<span class="t" style="font-size:11px;color:#505050;top:179.75px;left:992.10px;">W</span>
<span class="t" style="font-size:11.4px;color:#217346;top:197.55px;font-weight:700;left:9.43px;">1</span>
<span class="t" style="font-size:11px;color:#505050;top:218.75px;left:9.60px;transform:scaleX(0.9796);">2</span>
<span class="t" style="font-size:11px;color:#505050;top:235.75px;left:9.60px;transform:scaleX(0.9796);">3</span>
<span class="t" style="font-size:11px;color:#505050;top:254.75px;left:9.60px;transform:scaleX(0.9796);">4</span>
<span class="t" style="font-size:11px;color:#505050;top:272.75px;left:9.60px;transform:scaleX(0.9796);">5</span>
<span class="t" style="font-size:11px;color:#505050;top:291.75px;left:9.60px;transform:scaleX(0.9796);">6</span>
<span class="t" style="font-size:11px;color:#505050;top:309.75px;left:9.60px;transform:scaleX(0.9796);">7</span>
<span class="t" style="font-size:11px;color:#505050;top:327.75px;left:9.60px;transform:scaleX(0.9796);">8</span>
<span class="t" style="font-size:11px;color:#505050;top:345.75px;left:9.60px;transform:scaleX(0.9796);">9</span>
<span class="t" style="font-size:11px;color:#505050;top:364.75px;left:6.60px;transform:scaleX(0.9796);">10</span>
<span class="t" style="font-size:11px;color:#505050;top:382.75px;left:6.60px;transform:scaleX(1.0506);">11</span>
<span class="t" style="font-size:11px;color:#505050;top:400.75px;left:6.60px;transform:scaleX(0.9796);">12</span>
<span class="t" style="font-size:11px;color:#505050;top:418.75px;left:6.60px;transform:scaleX(0.9796);">13</span>
<span class="t" style="font-size:11px;color:#505050;top:436.75px;left:6.60px;transform:scaleX(0.9796);">14</span>
<span class="t" style="font-size:11px;color:#505050;top:455.75px;left:6.60px;transform:scaleX(0.9796);">15</span>
<span class="t" style="font-size:11px;color:#505050;top:474.75px;left:6.60px;transform:scaleX(0.9796);">16</span>
<div class="clip" style="left:1.00px;top:489.30px;width:23.00px;height:4.40px"><span class="t" style="font-size:11px;color:#505050;top:1.45px;left:5.60px;transform:scaleX(0.9796);">17</span></div>
<span class="t c" style="font-size:9.75px;color:#000;top:198.88px;font-weight:700;left:244.20px;transform:scaleX(0.9253);">Type</span>
<span class="t c" style="font-size:9.75px;color:#000;top:198.88px;font-weight:700;left:304.60px;transform:scaleX(1.0123);">Date</span>
<span class="t c" style="font-size:9.75px;color:#000;top:198.88px;font-weight:700;left:361.10px;transform:scaleX(0.9921);">Num</span>
<span class="t c" style="font-size:9.75px;color:#000;top:198.88px;font-weight:700;left:404.30px;transform:scaleX(1.0243);">Adj</span>
<span class="t c" style="font-size:9.75px;color:#000;top:198.88px;font-weight:700;left:515.80px;transform:scaleX(1.0353);">Name</span>
<span class="t c" style="font-size:9.75px;color:#000;top:198.88px;font-weight:700;left:652.00px;transform:scaleX(1.1288);">Memo</span>
<span class="t c" style="font-size:9.75px;color:#000;top:198.88px;font-weight:700;left:745.00px;transform:scaleX(1.0564);">Class</span>
<span class="t c" style="font-size:9.75px;color:#000;top:198.88px;font-weight:700;left:819.30px;transform:scaleX(1.0704);">Clr</span>
<span class="t c" style="font-size:9.75px;color:#000;top:198.88px;font-weight:700;left:911.30px;transform:scaleX(0.9941);">Split</span>
<span class="t c" style="font-size:10.3px;color:#000;top:219.60px;font-weight:700;left:45.70px;">40100 · Construction Income</span>
<span class="t c" style="font-size:10.3px;color:#000;top:237.60px;font-weight:700;left:64.60px;">40130 · Labor Income</span>
<span class="t c" style="font-size:9.75px;color:#000;top:456.88px;left:64.40px;transform:scaleX(1.0076);">Total 40130 · Labor Income</span>
<span class="t c" style="font-size:9.75px;color:#000;top:475.88px;left:45.80px;transform:scaleX(1.0047);">Total 40100 · Construction Income</span>
<div class="clip" style="left:24.00px;top:489.30px;width:100.00px;height:4.40px"><span class="t c" style="font-size:10.3px;color:#000;top:2.30px;font-weight:700;left:2.00px;transform:scaleX(0.8689);">TOTAL</span></div>
<span class="t c" style="font-size:9.75px;color:#000;top:255.88px;left:237.60px;transform:scaleX(0.9836);">Invoice</span>
<span class="t c" style="font-size:9.75px;color:#000;top:255.88px;left:292.00px;transform:scaleX(0.9875);">12/01/2019</span>
<span class="t c" style="font-size:9.75px;color:#000;top:255.88px;left:360.00px;transform:scaleX(0.9814);">1087</span>
<span class="t c" style="font-size:9.75px;color:#000;top:255.88px;left:440.60px;">Roche, Diarmuid:Garage repairs</span>
<span class="t c" style="font-size:9.75px;color:#000;top:255.88px;left:637.50px;transform:scaleX(1.0302);">Repair work</span>
<span class="t c" style="font-size:9.75px;color:#000;top:255.88px;left:717.50px;transform:scaleX(0.9608);">Remodel</span>
<span class="t c" style="font-size:9.75px;color:#000;top:255.88px;left:854.40px;transform:scaleX(1.0304);">11000 · Accounts Receivable</span>
<span class="t c" style="font-size:9.75px;color:#000;top:273.88px;left:237.60px;transform:scaleX(0.9836);">Invoice</span>
<span class="t c" style="font-size:9.75px;color:#000;top:273.88px;left:292.00px;transform:scaleX(0.9875);">12/01/2019</span>
<span class="t c" style="font-size:9.75px;color:#000;top:273.88px;left:360.00px;transform:scaleX(0.9814);">1088</span>
<span class="t c" style="font-size:9.75px;color:#000;top:273.88px;left:440.60px;transform:scaleX(0.9941);">Robson, Darci:Robson Clinic</span>
<span class="t c" style="font-size:9.75px;color:#000;top:273.88px;left:637.50px;transform:scaleX(0.9260);">-MULTIPLE-</span>
<span class="t c" style="font-size:9.75px;color:#000;top:273.88px;left:717.50px;transform:scaleX(1.0240);">New Construction</span>
<span class="t c" style="font-size:9.75px;color:#000;top:273.88px;left:854.40px;transform:scaleX(1.0304);">11000 · Accounts Receivable</span>
<span class="t c" style="font-size:9.75px;color:#000;top:291.88px;left:237.60px;transform:scaleX(0.9836);">Invoice</span>
<span class="t c" style="font-size:9.75px;color:#000;top:291.88px;left:292.00px;transform:scaleX(0.9875);">12/05/2019</span>
<span class="t c" style="font-size:9.75px;color:#000;top:291.88px;left:360.00px;transform:scaleX(0.9814);">1089</span>
<span class="t c" style="font-size:9.75px;color:#000;top:291.88px;left:440.60px;">Violette, Mike:Workshop</span>
<span class="t c" style="font-size:9.75px;color:#000;top:291.88px;left:637.50px;transform:scaleX(0.9260);">-MULTIPLE-</span>
<span class="t c" style="font-size:9.75px;color:#000;top:291.88px;left:717.50px;transform:scaleX(1.0240);">New Construction</span>
<span class="t c" style="font-size:9.75px;color:#000;top:291.88px;left:854.40px;transform:scaleX(1.0304);">11000 · Accounts Receivable</span>
<span class="t c" style="font-size:9.75px;color:#000;top:310.88px;left:237.60px;transform:scaleX(0.9836);">Invoice</span>
<span class="t c" style="font-size:9.75px;color:#000;top:310.88px;left:292.00px;transform:scaleX(0.9875);">12/10/2019</span>
<span class="t c" style="font-size:9.75px;color:#000;top:310.88px;left:360.00px;transform:scaleX(0.9814);">1091</span>
<span class="t c" style="font-size:9.75px;color:#000;top:310.88px;left:440.60px;transform:scaleX(1.0048);">Abercrombie, Kristy:Remodel Bathroom</span>
<span class="t c" style="font-size:9.75px;color:#000;top:310.88px;left:637.50px;transform:scaleX(0.9260);">-MULTIPLE-</span>
<span class="t c" style="font-size:9.75px;color:#000;top:310.88px;left:717.50px;transform:scaleX(0.9608);">Remodel</span>
<span class="t c" style="font-size:9.75px;color:#000;top:310.88px;left:854.40px;transform:scaleX(1.0304);">11000 · Accounts Receivable</span>
<span class="t c" style="font-size:9.75px;color:#000;top:328.88px;left:237.60px;transform:scaleX(0.9836);">Invoice</span>
<span class="t c" style="font-size:9.75px;color:#000;top:328.88px;left:292.00px;transform:scaleX(0.9875);">12/10/2019</span>
<span class="t c" style="font-size:9.75px;color:#000;top:328.88px;left:360.00px;transform:scaleX(0.9814);">1092</span>
<span class="t c" style="font-size:9.75px;color:#000;top:328.88px;left:440.60px;transform:scaleX(0.9705);">Campbell, Heather:Remodel</span>
<span class="t c" style="font-size:9.75px;color:#000;top:328.88px;left:637.50px;transform:scaleX(0.9260);">-MULTIPLE-</span>
<span class="t c" style="font-size:9.75px;color:#000;top:328.88px;left:717.50px;transform:scaleX(0.9608);">Remodel</span>
<span class="t c" style="font-size:9.75px;color:#000;top:328.88px;left:854.40px;transform:scaleX(1.0304);">11000 · Accounts Receivable</span>
<span class="t c" style="font-size:9.75px;color:#000;top:346.88px;left:237.60px;transform:scaleX(0.9836);">Invoice</span>
<span class="t c" style="font-size:9.75px;color:#000;top:346.88px;left:292.00px;transform:scaleX(0.9875);">12/12/2019</span>
<span class="t c" style="font-size:9.75px;color:#000;top:346.88px;left:360.00px;transform:scaleX(0.9814);">1093</span>
<span class="t c" style="font-size:9.75px;color:#000;top:346.88px;left:440.60px;">Lew Plumbing - C:Storage Expansion</span>
<span class="t c" style="font-size:9.75px;color:#000;top:346.88px;left:637.50px;transform:scaleX(0.9691);">Framing labor</span>
<span class="t c" style="font-size:9.75px;color:#000;top:346.88px;left:717.50px;transform:scaleX(0.9608);">Remodel</span>
<span class="t c" style="font-size:9.75px;color:#000;top:346.88px;left:854.40px;transform:scaleX(1.0304);">11000 · Accounts Receivable</span>
<span class="t c" style="font-size:9.75px;color:#000;top:364.88px;left:237.60px;transform:scaleX(0.9836);">Invoice</span>
<span class="t c" style="font-size:9.75px;color:#000;top:364.88px;left:292.00px;transform:scaleX(0.9875);">12/14/2019</span>
<span class="t c" style="font-size:9.75px;color:#000;top:364.88px;left:360.00px;transform:scaleX(0.9814);">1094</span>
<span class="t c" style="font-size:9.75px;color:#000;top:364.88px;left:440.60px;transform:scaleX(0.9825);">Natiello, Ernesto:Kitchen</span>
<span class="t c" style="font-size:9.75px;color:#000;top:364.88px;left:637.50px;transform:scaleX(0.9260);">-MULTIPLE-</span>
<span class="t c" style="font-size:9.75px;color:#000;top:364.88px;left:717.50px;transform:scaleX(0.9608);">Remodel</span>
<span class="t c" style="font-size:9.75px;color:#000;top:364.88px;left:854.40px;transform:scaleX(1.0304);">11000 · Accounts Receivable</span>
<span class="t c" style="font-size:9.75px;color:#000;top:383.88px;left:237.60px;transform:scaleX(0.9836);">Invoice</span>
<span class="t c" style="font-size:9.75px;color:#000;top:383.88px;left:292.00px;transform:scaleX(0.9875);">12/14/2019</span>
<span class="t c" style="font-size:9.75px;color:#000;top:383.88px;left:360.00px;transform:scaleX(0.9814);">1095</span>
<span class="t c" style="font-size:9.75px;color:#000;top:383.88px;left:440.60px;transform:scaleX(0.9825);">Natiello, Ernesto:Kitchen</span>
<span class="t c" style="font-size:9.75px;color:#000;top:383.88px;left:637.50px;transform:scaleX(0.9260);">-MULTIPLE-</span>
<span class="t c" style="font-size:9.75px;color:#000;top:383.88px;left:717.50px;transform:scaleX(0.9608);">Remodel</span>
<span class="t c" style="font-size:9.75px;color:#000;top:383.88px;left:854.40px;transform:scaleX(1.0304);">11000 · Accounts Receivable</span>
<span class="t c" style="font-size:9.75px;color:#000;top:401.88px;left:237.60px;transform:scaleX(0.9836);">Invoice</span>
<span class="t c" style="font-size:9.75px;color:#000;top:401.88px;left:292.00px;transform:scaleX(0.9875);">12/14/2019</span>
<span class="t c" style="font-size:9.75px;color:#000;top:401.88px;left:360.00px;transform:scaleX(0.9814);">1096</span>
<span class="t c" style="font-size:9.75px;color:#000;top:401.88px;left:440.60px;transform:scaleX(0.9825);">Natiello, Ernesto:Kitchen</span>
<span class="t c" style="font-size:9.75px;color:#000;top:401.88px;left:637.50px;transform:scaleX(0.9260);">-MULTIPLE-</span>
<span class="t c" style="font-size:9.75px;color:#000;top:401.88px;left:717.50px;transform:scaleX(0.9608);">Remodel</span>
<span class="t c" style="font-size:9.75px;color:#000;top:401.88px;left:854.40px;transform:scaleX(1.0304);">11000 · Accounts Receivable</span>
<span class="t c" style="font-size:9.75px;color:#000;top:419.88px;left:237.60px;transform:scaleX(0.9836);">Invoice</span>
<span class="t c" style="font-size:9.75px;color:#000;top:419.88px;left:292.00px;transform:scaleX(0.9875);">12/15/2019</span>
<span class="t c" style="font-size:9.75px;color:#000;top:419.88px;left:360.00px;transform:scaleX(0.9814);">1097</span>
<span class="t c" style="font-size:9.75px;color:#000;top:419.88px;left:440.60px;transform:scaleX(0.9941);">Robson, Darci:Robson Clinic</span>
<span class="t c" style="font-size:9.75px;color:#000;top:419.88px;left:637.50px;transform:scaleX(0.9260);">-MULTIPLE-</span>
<span class="t c" style="font-size:9.75px;color:#000;top:419.88px;left:717.50px;transform:scaleX(1.0240);">New Construction</span>
<span class="t c" style="font-size:9.75px;color:#000;top:419.88px;left:854.40px;transform:scaleX(1.0304);">11000 · Accounts Receivable</span>
<span class="t c" style="font-size:9.75px;color:#000;top:437.88px;left:237.60px;transform:scaleX(0.9836);">Invoice</span>
<span class="t c" style="font-size:9.75px;color:#000;top:437.88px;left:292.00px;transform:scaleX(0.9875);">12/15/2019</span>
<span class="t c" style="font-size:9.75px;color:#000;top:437.88px;left:360.00px;transform:scaleX(0.9814);">1098</span>
<span class="t c" style="font-size:9.75px;color:#000;top:437.88px;left:440.60px;transform:scaleX(0.9771);">Cook, Brian:Kitchen</span>
<span class="t c" style="font-size:9.75px;color:#000;top:437.88px;left:637.50px;transform:scaleX(0.9260);">-MULTIPLE-</span>
<span class="t c" style="font-size:9.75px;color:#000;top:437.88px;left:717.50px;transform:scaleX(0.9608);">Remodel</span>
<span class="t c" style="font-size:9.75px;color:#000;top:437.88px;left:854.40px;transform:scaleX(1.0304);">11000 · Accounts Receivable</span>
<span class="t" style="font-size:12.2px;color:#505050;top:500.15px;left:107.00px;transform:scaleX(0.9585);">QuickBooks Export Tips</span>
<span class="t" style="font-size:12.2px;color:#217346;top:500.15px;font-weight:700;left:258.00px;transform:scaleX(0.9257);">Sheet1</span>
<span class="t" style="font-size:10px;color:#fff;top:524.75px;left:7.80px;transform:scaleX(0.8591);">READY</span>
<span class="t" style="font-size:10.2px;color:#fff;top:524.65px;left:980.00px;transform:scaleX(0.9592);">100%</span>
<span class="t" style="font-size:12.4px;color:#666;top:8.05px;font-weight:700;left:900.20px;-webkit-text-stroke:.45px #666;">?</span>
<span class="t" style="font-size:15px;color:#3f7fc4;top:55.25px;left:917.70px;transform:scaleX(0.9685);-webkit-text-stroke:.35px #3f7fc4;">A</span>
<span class="t" style="font-size:15px;color:#9a56b8;top:68.25px;left:918.00px;-webkit-text-stroke:.35px #9a56b8;">Z</span>
<span class="t" style="font-size:10.4px;color:#555;top:63.55px;left:342.60px;transform:rotate(-48deg);transform-origin:50% 50%;">ab</span>
<span class="t" style="font-size:11.5px;color:#555;top:93.50px;left:518.60px;">$</span>
<span class="t" style="font-size:11.5px;color:#555;top:93.50px;left:548.60px;">%</span>
<span class="t" style="font-size:6.5px;color:#555;top:97.50px;left:596.40px;">.00</span>
<span class="t" style="font-size:6.5px;color:#555;top:97.50px;left:619.00px;">.0</span>
</div>
<div class="lay">
<div style="position:absolute;left:351px;top:38px;width:374px;height:55.7px;border:3px solid #5fa32b;background:#fff;box-shadow:1.5px 2px 4px rgba(0,0,0,.45)"></div>
<svg width="1024" height="540" viewBox="0 0 1024 540">
<defs><filter id="sh" x="-20%" y="-20%" width="140%" height="150%"><feGaussianBlur in="SourceAlpha" stdDeviation="1.6"/><feOffset dx="1.2" dy="2.2"/><feComponentTransfer><feFuncA type="linear" slope="0.5"/></feComponentTransfer><feMerge><feMergeNode/><feMergeNode in="SourceGraphic"/></feMerge></filter></defs>
<path filter="url(#sh)" d="M166.3 197L207.3 169.7L205.2 182.6L331.2 206.6L312.6 230.2L319.9 259.5L195.3 226.6L191.3 238.4Z" fill="#4b7bcb" stroke="#fff" stroke-width="3" paint-order="stroke" stroke-linejoin="miter"/>
<path filter="url(#sh)" d="M687 134.3H774.4A12 12 0 0 1 786.4 146.3V172.2A12 12 0 0 1 774.4 184.2H687A12 12 0 0 1 675 172.2V170.6L623.8 209L675 161.4V146.3A12 12 0 0 1 687 134.3Z" fill="#fff" stroke="#e8494d" stroke-width="2.2" stroke-linejoin="round"/>
</svg>
<div style="position:absolute;left:254.6px;top:217.6px;width:0;height:0;transform:rotate(12.4deg)"><span class="t" style="font-size:14px;color:rgba(255,255,255,.9);left:-47.8px;top:-16.4px">Report header</span><span class="t" style="font-size:14px;color:rgba(255,255,255,.9);left:-40.4px;top:0.4px">is not visible</span></div>
<span class="t" style="font-size:18.4px;color:#5fa32b;top:58.55px;font-weight:700;left:387.60px;transform:scaleX(1.0484);">Before editing advanced features</span>
<span class="t" style="font-size:14.2px;color:#e8494d;top:144.15px;left:685.80px;transform:scaleX(0.9701);">Extra columns</span>
<span class="t" style="font-size:14.2px;color:#e8494d;top:160.15px;left:708.20px;transform:scaleX(1.0341);">added</span>
</div>
</body></html>
